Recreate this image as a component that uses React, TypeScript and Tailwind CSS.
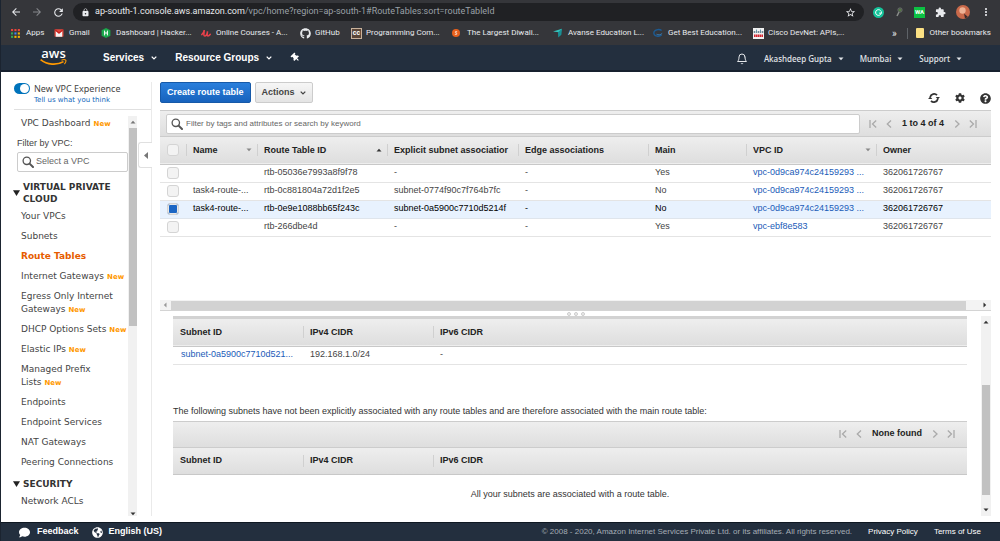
import React from "react";
import {
  MdArrowBack,
  MdArrowForward,
  MdRefresh,
  MdLock,
  MdStarBorder,
  MdExtension,
  MdMoreVert,
} from "react-icons/md";
import { FaCog, FaQuestionCircle, FaGithub, FaComment, FaGlobeAmericas, FaThumbtack } from "react-icons/fa";
import { FiBell } from "react-icons/fi";

const ARIAL = "font-['Liberation_Sans',Arial,sans-serif]";
const VERDANA = "font-['DejaVu_Sans',Verdana,sans-serif]";
const SEGOE = "font-['Roboto','Segoe_UI',sans-serif]";
const EMBER = "font-['Noto_Sans',sans-serif]";

function AppsIcon() {
  const colors = ["#e8453c", "#e8453c", "#e8453c", "#34a853", "#4285f4", "#f4b400", "#34a853", "#f4b400", "#f4b400"];
  return (
    <svg viewBox="0 0 9 9" className="size-[9px]">
      {colors.map((c, i) => (
        <rect key={i} x={(i % 3) * 3.4} y={Math.floor(i / 3) * 3.4} width="2.1" height="2.1" fill={c} />
      ))}
    </svg>
  );
}

function GmailIcon() {
  return (
    <svg viewBox="0 0 10 10" className="size-[10px]">
      <rect x="0.5" y="1.2" width="9" height="7.6" rx="0.8" fill="#e04a3f" />
      <path d="M1.8 8.8V3.2L5 5.8l3.2-2.6v5.6z" fill="#f4f4f4" />
      <path d="M1 1.6 5 5l4-3.4" fill="none" stroke="#c5221f" strokeWidth="1.2" />
    </svg>
  );
}

function HackerIcon() {
  return (
    <svg viewBox="0 0 10 10" className="size-[10px]">
      <path d="M5 0l4.400 2.300v5.400L5 10 .6 7.700V2.300z" fill="#1ba94c" />
      <path d="M3.600 2.600v4.800M6.400 2.600v4.800M3.600 5h2.800" stroke="#fff" strokeWidth="1" />
    </svg>
  );
}

function UdemyIcon() {
  return (
    <svg viewBox="0 0 10 10" className="size-[10px]">
      <path
        d="M.8 6.600C2.400 5.400 3 3.400 3.200 2c.2 2-1.200 6 .6 6 1.400 0 2.400-2.600 2.800-4.600C6.200 5.600 5.800 8 7 8c.9 0 1.600-.8 2.300-1.700"
        fill="none"
        stroke="#e8414a"
        strokeWidth="1.500"
        strokeLinecap="round"
      />
    </svg>
  );
}

function CodechefIcon() {
  return (
    <span className="flex h-[11px] w-[11px] items-center justify-center border border-[#c9b29c] bg-[#5b4638] text-[7px] leading-none font-bold text-white">
      cc
    </span>
  );
}

function DiwaliIcon() {
  return (
    <svg viewBox="0 0 8 8" className="size-[8px]">
      <circle cx="4" cy="4" r="4" fill="#e8601c" />
      <path d="M5.200 2.600H3.400v1.300h1.300v1.500H2.800" fill="none" stroke="#fde3d3" strokeWidth=".8" />
    </svg>
  );
}

function AvanseIcon() {
  return (
    <svg viewBox="0 0 10 10" className="size-[10px]">
      <path d="M0 3.500 9 .8 7.600 4.600z" fill="#35c5bd" />
      <path d="M9 .8 8.400 6.800 5.200 9.400 5 4.200z" fill="#1a8f95" />
    </svg>
  );
}

function EduIcon() {
  return (
    <svg viewBox="0 0 10 10" className="size-[10px]">
      <path d="M8.600 2.600C6 .4.8 1.800.8 5c0 3.400 5.400 4.200 7.800 2" fill="none" stroke="#1c5b93" strokeWidth="1.300" />
      <path d="M3.500 6.200c1.500 1 4.300.8 5.700-.8" fill="none" stroke="#3d8bc9" strokeWidth=".8" />
    </svg>
  );
}

function CiscoIcon() {
  return (
    <svg viewBox="0 0 11 11" className="size-[11px]">
      <rect width="11" height="11" fill="#f1f1f1" />
      <path d="M1.500 3v2M3.500 1.600v3.400M5.500 3v2M7.500 1.600v3.400M9.500 3v2" stroke="#3a7f9e" strokeWidth=".8" />
      <path d="M0 4h11" stroke="#777" strokeWidth=".6" />
      <path d="M1 7.800h9" stroke="#d3232e" strokeWidth="2.400" strokeDasharray="1.500 .4" />
    </svg>
  );
}

const bookmarks: { label: string; icon: React.ReactNode; width: string }[] = [
  { label: "Apps", icon: <AppsIcon />, width: "w-[43px]" },
  { label: "Gmail", icon: <GmailIcon />, width: "w-[47px]" },
  { label: "Dashboard | Hacker...", icon: <HackerIcon />, width: "w-[100px]" },
  { label: "Online Courses - A...", icon: <UdemyIcon />, width: "w-[99px]" },
  { label: "GitHub", icon: <FaGithub className="size-[11px]" />, width: "w-[51px]" },
  { label: "Programming Com...", icon: <CodechefIcon />, width: "w-[101px]" },
  { label: "The Largest Diwali...", icon: <DiwaliIcon />, width: "w-[101px]" },
  { label: "Avanse Education L...", icon: <AvanseIcon />, width: "w-[100px]" },
  { label: "Get Best Education...", icon: <EduIcon />, width: "w-[100px]" },
  { label: "Cisco DevNet: APIs,...", icon: <CiscoIcon />, width: "w-[100px]" },
];

function BrowserChrome() {
  return (
    <div className={`bg-[#35363a] text-[#e8eaed] ${SEGOE}`}>
      <div className="flex h-6 items-center">
        <button aria-label="Back" className="ml-[9px]">
          <MdArrowBack className="size-3" />
        </button>
        <button aria-label="Forward" className="ml-[9px] text-[#85878b]">
          <MdArrowForward className="size-3" />
        </button>
        <button aria-label="Reload" className="ml-[9px]">
          <MdRefresh className="size-[13px]" />
        </button>
        <div className="ml-2 flex h-[18px] flex-1 items-center rounded-full bg-[#202124] px-2">
          <MdLock className="size-[9px] shrink-0" />
          <span className="ml-[5px] flex-1 text-[9px] whitespace-nowrap text-[#9aa0a6]">
            <span className="text-[#e8eaed]">ap-south-1.console.aws.amazon.com</span>
            /vpc/home?region=ap-south-1#RouteTables:sort=routeTableId
          </span>
          <button aria-label="Bookmark this page">
            <MdStarBorder className="size-[11px]" />
          </button>
        </div>
        <div className="flex items-center gap-[10px] pr-2 pl-[9px]">
          <svg viewBox="0 0 10 10" className="size-[11px]">
            <circle cx="5" cy="5" r="5" fill="#15c39a" />
            <path d="M7 3.400A2.600 2.600 0 1 0 7.500 5.600H5.600M7.600 4v1.700" fill="none" stroke="#fff" strokeWidth=".9" />
          </svg>
          <svg viewBox="0 0 10 10" className="size-[10px]">
            <circle cx="6" cy="3" r="2.200" fill="#4a524a" stroke="#7c857c" strokeWidth=".6" />
            <path d="M5 5 3 9" stroke="#8a8f8a" strokeWidth="1.600" />
            <circle cx="6" cy="3" r=".9" fill="#5a8f3c" />
          </svg>
          <span className="flex h-[11px] w-[11px] items-center justify-center bg-[#0cc143] text-[6px] leading-none font-bold text-white">
            WA
          </span>
          <MdExtension className="size-[11px]" />
          <svg viewBox="0 0 14 14" className="size-[14px]">
            <circle cx="7" cy="7" r="7" fill="#c9694a" />
            <circle cx="6.500" cy="5.500" r="3.200" fill="#eeb295" />
            <path d="M8 8.500 12 12l-3 1.600z" fill="#3b2a2a" />
          </svg>
          <button aria-label="Menu">
            <MdMoreVert className="size-3" />
          </button>
        </div>
      </div>
      <div className="flex h-[21px] items-center pb-[3px] pl-[10px] text-[8px] whitespace-nowrap">
        {bookmarks.map((b) => (
          <a key={b.label} href="#" className={`flex shrink-0 items-center ${b.width}`}>
            <span className="flex w-[15px] shrink-0 items-center">{b.icon}</span>
            {b.label}
          </a>
        ))}
        <span className="ml-auto pr-[6px] text-[10px]">»</span>
        <span className="mx-1 h-[11px] w-px bg-[#5f6368]" />
        <a href="#" className="flex items-center pr-[9px] pl-1">
          <span className="mr-[6px] h-[10px] w-2 rounded-[1px] bg-[#fbe083]" />
          Other bookmarks
        </a>
      </div>
    </div>
  );
}

function Caret({ className = "" }: { className?: string }) {
  return (
    <svg viewBox="0 0 6 4" className={`h-1 w-[6px] shrink-0 ${className}`}>
      <path d="M.5.5h5L3 3.200z" fill="currentColor" />
    </svg>
  );
}

function Chevron({ className = "" }: { className?: string }) {
  return (
    <svg viewBox="0 0 6 4" className={`h-1 w-[6px] shrink-0 ${className}`}>
      <path d="M.7.6 3 2.900 5.300.6" fill="none" stroke="currentColor" strokeWidth="1.300" />
    </svg>
  );
}

function AwsNav() {
  return (
    <header className="flex h-[27px] items-center border-b-2 border-[#16202e] bg-[#232f3e] pl-[39px] text-white">
      <a href="#" aria-label="AWS home" className="flex w-[27px] flex-col items-center">
        <span className="font-['Open_Sans',sans-serif] text-[13px] leading-[9px] font-semibold">aws</span>
        <svg viewBox="0 0 27 8" className="h-2 w-[27px]">
          <path d="M.6 1.600C7 7 17 7.600 23.500 3.600" fill="none" stroke="#f90" strokeWidth="1.700" />
          <path d="M21.500 2.200c1.500-.7 3.600-.7 4.200-.1.500.7-.2 2.700-1.300 4" fill="none" stroke="#f90" strokeWidth="1.100" />
        </svg>
      </a>
      <nav className={`flex items-center text-[10px] font-bold ${ARIAL}`}>
        <button className="ml-9 flex items-center">
          Services <Chevron className="ml-[7px]" />
        </button>
        <button className="ml-[18px] flex items-center">
          Resource Groups <Chevron className="ml-[7px]" />
        </button>
        <button aria-label="Pin" className="ml-[19px]">
          <FaThumbtack className="size-[9px] -rotate-45" />
        </button>
      </nav>
      <div className={`ml-auto flex items-center pt-[2px] pr-[38px] text-[8px] font-medium text-[#e4e7ea] ${EMBER}`}>
        <button aria-label="Notifications" className="mr-4">
          <FiBell className="size-3" />
        </button>
        <button className="flex items-center">
          Akashdeep Gupta <Caret className="ml-[6px]" />
        </button>
        <button className="ml-4 flex items-center">
          Mumbai <Caret className="ml-[6px]" />
        </button>
        <button className="ml-4 flex items-center">
          Support <Caret className="ml-[6px]" />
        </button>
      </div>
    </header>
  );
}

function SearchIcon() {
  return (
    <svg viewBox="0 0 12 12" className="size-3 shrink-0 text-[#555]">
      <circle cx="4.800" cy="4.800" r="3.700" fill="none" stroke="currentColor" strokeWidth="1.300" />
      <path d="M7.600 7.600 11 11" stroke="currentColor" strokeWidth="2" strokeLinecap="round" />
    </svg>
  );
}

const vpcLinks: { lines: string[]; isNew?: boolean; active?: boolean }[] = [
  { lines: ["Your VPCs"] },
  { lines: ["Subnets"] },
  { lines: ["Route Tables"], active: true },
  { lines: ["Internet Gateways"], isNew: true },
  { lines: ["Egress Only Internet", "Gateways"], isNew: true },
  { lines: ["DHCP Options Sets"], isNew: true },
  { lines: ["Elastic IPs"], isNew: true },
  { lines: ["Managed Prefix", "Lists"], isNew: true },
  { lines: ["Endpoints"] },
  { lines: ["Endpoint Services"] },
  { lines: ["NAT Gateways"] },
  { lines: ["Peering Connections"] },
];

function NewTag() {
  return <span className="ml-[3px] text-[7px] leading-none font-bold text-[#ff9900]">New</span>;
}

function SectionTitle({ children }: { children: React.ReactNode }) {
  return (
    <h2 className="flex items-center gap-[3px] pl-3 text-[9px] leading-3 font-bold text-[#333]">
      <svg viewBox="0 0 7 6" className="h-[6px] w-[7px] shrink-0">
        <path d="M0 .3h7L3.500 6z" fill="#222" />
      </svg>
      <span className="whitespace-pre">{children}</span>
    </h2>
  );
}

function Sidebar() {
  return (
    <aside className={`relative mt-[10px] mb-[6px] flex w-[151px] shrink-0 flex-col border-r border-[#eaeaea] text-[#444] ${VERDANA}`}>
      <div className="ml-[13px] flex h-7 items-start border-b border-[#e0e0e0] pt-[1px]">
        <label className="mr-1 flex">
          <input type="checkbox" defaultChecked className="peer sr-only" aria-label="New VPC Experience" />
          <span className="flex h-[11px] w-4 items-center justify-end rounded-full bg-[#0073bb] p-[1px]">
            <span className="size-[9px] rounded-full bg-white" />
          </span>
        </label>
        <div className={EMBER}>
          <p className="text-[9px] leading-3">New VPC Experience</p>
          <a href="#" className={`block text-[7px] leading-[10px] text-[#1166bb] ${VERDANA}`}>
            Tell us what you think
          </a>
        </div>
      </div>
      <div className="flex min-h-0 flex-1 pt-[6px]">
        <div className="w-[127px] shrink-0 pt-[1px] whitespace-nowrap">
          <a href="#" className="block pl-5 text-[9px] leading-[13px]">
            VPC Dashboard
            <NewTag />
          </a>
          <label htmlFor="vpc-filter" className={`mt-[7px] block pl-4 text-[9px] leading-3 ${ARIAL}`}>
            Filter by VPC:
          </label>
          <div className="mt-[3px] ml-4 flex h-5 w-[111px] items-center rounded-[2px] border border-[#ccc] pl-1">
            <SearchIcon />
            <input
              id="vpc-filter"
              placeholder="Select a VPC"
              className={`ml-[2px] w-full min-w-0 text-[9px] outline-none placeholder:text-[#666] ${ARIAL}`}
            />
          </div>
          <div className="h-[9px]" />
          <SectionTitle>{"VIRTUAL PRIVATE\nCLOUD"}</SectionTitle>
          <ul className="mt-[5px] flex flex-col gap-[7px] pl-5 text-[9px] leading-[13px]">
            {vpcLinks.map((l) => (
              <li key={l.lines[0]}>
                <a href="#" className={l.active ? "block font-bold text-[#e65c00]" : "block"}>
                  {l.lines.map((line, i) => (
                    <span key={line} className="block">
                      {line}
                      {l.isNew && i === l.lines.length - 1 && <NewTag />}
                    </span>
                  ))}
                </a>
              </li>
            ))}
          </ul>
          <div className="h-[9px]" />
          <SectionTitle>SECURITY</SectionTitle>
          <a href="#" className="mt-[5px] block pl-5 text-[9px] leading-[13px]">
            Network ACLs
          </a>
        </div>
        <div className="flex w-[9px] flex-col items-center bg-[#f1f1f1]">
          <Caret className="my-[4px] rotate-180 text-[#777]" />
          <div className="h-[198px] w-2 bg-[#c1c1c1]" />
          <Caret className="mt-auto text-[#333]" />
        </div>
      </div>
      <button
        aria-label="Collapse sidebar"
        className="absolute top-[60px] right-[-1px] flex h-[26px] w-[14px] items-center justify-center rounded-l-[3px] border border-r-0 border-[#e0e0e0] bg-white"
      >
        <svg viewBox="0 0 4 7" className="h-[7px] w-1">
          <path d="M4 0v7L0 3.500z" fill="#777" />
        </svg>
      </button>
    </aside>
  );
}

function Pager({ label }: { label: string }) {
  const icon = "h-[10px] w-2";
  const stroke = { fill: "none", stroke: "#aaa", strokeWidth: 1.3 };
  return (
    <div className="flex items-center text-[9px] font-bold whitespace-nowrap text-[#222]">
      <button aria-label="First page">
        <svg viewBox="0 0 8 10" className={icon}>
          <path d="M1 1v8M7.200 1.500 3.500 5l3.700 3.500" {...stroke} />
        </svg>
      </button>
      <button aria-label="Previous page" className="ml-2">
        <svg viewBox="0 0 8 10" className={icon}>
          <path d="M6 1.500 2.300 5 6 8.500" {...stroke} />
        </svg>
      </button>
      <span className="mx-[9px]">{label}</span>
      <button aria-label="Next page">
        <svg viewBox="0 0 8 10" className={icon}>
          <path d="M2.300 1.500 6 5 2.300 8.500" {...stroke} />
        </svg>
      </button>
      <button aria-label="Last page" className="ml-2">
        <svg viewBox="0 0 8 10" className={icon}>
          <path d="M7 1v8M.8 1.500 4.500 5 .8 8.500" {...stroke} />
        </svg>
      </button>
    </div>
  );
}

function RowCheck({ checked = false, label }: { checked?: boolean; label: string }) {
  return (
    <input
      type="checkbox"
      aria-label={label}
      defaultChecked={checked}
      className="block size-3 appearance-none rounded-[3px] border border-[#d4d4d4] bg-[#f3f3f3] checked:bg-[#1b66c4] checked:shadow-[inset_0_0_0_1px_#e8e8e8]"
    />
  );
}

const GREY = "bg-linear-to-b from-[#eeeeee] to-[#dedede]";

function HeadCell({ children, sort }: { children?: React.ReactNode; sort?: "up" | "down" }) {
  return (
    <th scope="col" className="p-0 text-left font-bold">
      <div className="flex h-3 items-center overflow-hidden border-l border-[#d0d0d0] pr-[5px] pl-[6px] whitespace-nowrap">
        <span className="min-w-0 flex-1 overflow-hidden">{children}</span>
        {sort && <Caret className={sort === "up" ? "rotate-180 text-[#333]" : "text-[#888]"} />}
      </div>
    </th>
  );
}

const routes = [
  { name: "", id: "rtb-05036e7993a8f9f78", subnet: "-", main: "Yes", vpc: "vpc-0d9ca974c24159293 ..." },
  { name: "task4-route-...", id: "rtb-0c881804a72d1f2e5", subnet: "subnet-0774f90c7f764b7fc", main: "No", vpc: "vpc-0d9ca974c24159293 ..." },
  { name: "task4-route-...", id: "rtb-0e9e1088bb65f243c", subnet: "subnet-0a5900c7710d5214f", main: "No", vpc: "vpc-0d9ca974c24159293 ...", selected: true },
  { name: "", id: "rtb-266dbe4d", subnet: "-", main: "Yes", vpc: "vpc-ebf8e583" },
];

function RouteTable() {
  return (
    <table className="w-full table-fixed border-collapse text-[9px] whitespace-nowrap">
      <colgroup>
        <col className="w-[26px]" />
        <col className="w-[71px]" />
        <col className="w-[130px]" />
        <col className="w-[131px]" />
        <col className="w-[130px]" />
        <col className="w-[98px]" />
        <col className="w-[130px]" />
        <col />
      </colgroup>
      <thead>
        <tr className={`h-[27px] border-b border-[#c8c8c8] text-[#222] ${GREY}`}>
          <th className="p-0 pl-[7px]">
            <RowCheck label="Select all" />
          </th>
          <HeadCell sort="down">Name</HeadCell>
          <HeadCell sort="up">Route Table ID</HeadCell>
          <HeadCell>Explicit subnet associatior</HeadCell>
          <HeadCell>Edge associations</HeadCell>
          <HeadCell>Main</HeadCell>
          <HeadCell sort="down">VPC ID</HeadCell>
          <HeadCell>Owner</HeadCell>
        </tr>
      </thead>
      <tbody>
        {routes.map((r) => (
          <tr
            key={r.id}
            className={
              r.selected
                ? "h-[18px] border-b border-[#dfe5ec] bg-[#e8f2fe] text-black"
                : "h-[18px] border-b border-[#e4e4e4] text-[#444]"
            }
          >
            <td className="p-0 pl-[7px]">
              <RowCheck checked={r.selected} label={`Select ${r.id}`} />
            </td>
            <td className="p-0 pl-[7px]">{r.name}</td>
            <td className="p-0 pl-[7px]">{r.id}</td>
            <td className="p-0 pl-[7px]">{r.subnet}</td>
            <td className="p-0 pl-[7px]">-</td>
            <td className="p-0 pl-[7px]">{r.main}</td>
            <td className="p-0 pl-[7px]">
              <a href="#" className="text-[#1a5bb8]">
                {r.vpc}
              </a>
            </td>
            <td className="p-0 pl-[7px]">362061726767</td>
          </tr>
        ))}
      </tbody>
    </table>
  );
}

function SubnetTable({ children }: { children?: React.ReactNode }) {
  return (
    <table className="w-full table-fixed border-collapse text-[9px] whitespace-nowrap">
      <colgroup>
        <col className="w-[130px]" />
        <col className="w-[130px]" />
        <col />
      </colgroup>
      <thead>
        <tr className={`h-[27px] border-b border-[#c8c8c8] text-left text-[#222] ${GREY}`}>
          <th scope="col" className="p-0 pl-[7px]">
            Subnet ID
          </th>
          <HeadCell>IPv4 CIDR</HeadCell>
          <HeadCell>IPv6 CIDR</HeadCell>
        </tr>
      </thead>
      {children && <tbody>{children}</tbody>}
    </table>
  );
}

function Details() {
  return (
    <section className="flex">
      <div className="min-w-0 flex-1 pr-[14px] pl-[13px] text-[9px] text-[#333]">
        <div className="border-t-[3px] border-[#d2d2d2]">
          <SubnetTable>
            <tr className="h-[18px] border-b border-[#e4e4e4] text-[#444]">
              <td className="p-0 pl-2">
                <a href="#" className="text-[#1a5bb8]">
                  subnet-0a5900c7710d521...
                </a>
              </td>
              <td className="p-0 pl-[7px]">192.168.1.0/24</td>
              <td className="p-0 pl-[7px]">-</td>
            </tr>
          </SubnetTable>
        </div>
        <p className="mt-[40px] mb-1 leading-3">
          The following subnets have not been explicitly associated with any route tables and are therefore associated
          with the main route table:
        </p>
        <div className={`flex h-[27px] items-center justify-end border-y border-[#ccc] pr-3 ${GREY}`}>
          <Pager label="None found" />
        </div>
        <SubnetTable />
        <p className="pt-[13px] pb-4 text-center leading-3">All your subnets are associated with a route table.</p>
      </div>
      <div className="flex w-[10px] shrink-0 flex-col items-center bg-[#f1f1f1]">
        <Caret className="mt-1 rotate-180 text-[#333]" />
        <div className="mt-[61px] h-[110px] w-2 bg-[#c1c1c1]" />
        <Caret className="mt-auto mb-1 text-[#333]" />
      </div>
    </section>
  );
}

function Main() {
  return (
    <main className={`mr-[9px] mb-[6px] ml-2 flex min-w-0 flex-1 flex-col pt-[10px] ${ARIAL}`}>
      <div className="flex h-7 items-start text-[9px] font-bold">
        <button className="h-[21px] rounded-[2px] border border-[#1659a8] bg-linear-to-b from-[#2a7fdc] to-[#1762bd] px-[6px] text-white">
          Create route table
        </button>
        <button className="ml-1 flex h-[21px] items-center rounded-[2px] border border-[#ccc] bg-linear-to-b from-[#f6f6f6] to-[#e4e4e4] px-[6px] text-[#444]">
          Actions <Chevron className="ml-[5px]" />
        </button>
        <div className="ml-auto flex items-center gap-[15px] self-end pb-[6px] text-[#333]">
          <button aria-label="Refresh">
            <svg viewBox="0 0 12 12" className="size-3">
              <path d="M2.200 5A4 4 0 0 1 9 3.200M9.800 7A4 4 0 0 1 3 8.800" fill="none" stroke="currentColor" strokeWidth="1.800" />
              <path d="M7.700 5h4.200L9.900 7.400zM.1 7h4.200L2.100 4.500z" fill="currentColor" />
            </svg>
          </button>
          <button aria-label="Settings">
            <FaCog className="size-[10px]" />
          </button>
          <button aria-label="Help">
            <FaQuestionCircle className="size-[11px]" />
          </button>
        </div>
      </div>
      <div className={`flex h-[27px] items-center border-y border-[#ccc] pr-[14px] pl-[6px] ${GREY}`}>
        <div className="flex h-5 flex-1 items-center rounded-[2px] border border-[#ccc] bg-white pl-1">
          <SearchIcon />
          <input
            aria-label="Filter route tables"
            placeholder="Filter by tags and attributes or search by keyword"
            className="ml-[3px] flex-1 text-[8px] outline-none placeholder:text-[#666]"
          />
        </div>
        <div className="ml-[9px]">
          <Pager label="1 to 4 of 4" />
        </div>
      </div>
      <div className="flex-1">
        <RouteTable />
      </div>
      <div className="flex h-[11px] items-center border-b border-[#d4d4d4] bg-[#f3f3f3]">
        <Caret className="mr-[3px] ml-[2px] rotate-90 text-[#999]" />
        <div className="h-[9px] flex-1 bg-[#d2d2d2]" />
        <Caret className="mr-[3px] ml-4 -rotate-90 text-[#333]" />
      </div>
      <div className="flex h-[5px] items-center justify-center gap-[3px]">
        {[0, 1, 2].map((i) => (
          <span key={i} className="size-[4px] rounded-full border border-[#ccc] bg-[#eee]" />
        ))}
      </div>
      <Details />
    </main>
  );
}

function Footer() {
  return (
    <footer className={`flex h-[19px] items-center border-t border-[#0f1822] bg-[#232f3e] pl-[18px] text-white ${ARIAL}`}>
      <button className="flex items-center text-[9px] font-bold">
        <FaComment className="mr-[7px] size-[11px]" /> Feedback
      </button>
      <button className="ml-[13px] flex items-center text-[9px] font-bold">
        <FaGlobeAmericas className="mr-[6px] size-[11px]" /> English (US)
      </button>
      <div className="ml-auto flex items-center gap-4 pr-[19px] text-[8px]">
        <span className="text-[#a5adb5]">
          © 2008 - 2020, Amazon Internet Services Private Ltd. or its affiliates. All rights reserved.
        </span>
        <a href="#">Privacy Policy</a>
        <a href="#">Terms of Use</a>
      </div>
    </footer>
  );
}

export default function App() {
  return (
    <div className="flex min-h-screen flex-col border-l border-[#1b2430] bg-white">
      <BrowserChrome />
      <AwsNav />
      <div className="flex flex-1">
        <Sidebar />
        <Main />
      </div>
      <Footer />
    </div>
  );
}
